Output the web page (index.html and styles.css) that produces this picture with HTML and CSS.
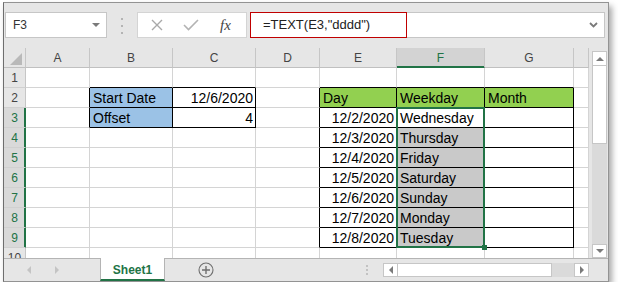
FILE: index.html
```html
<!DOCTYPE html>
<html lang="en">
<head>
    <meta charset="UTF-8">
    <title>TEXT weekday - Sheet1</title>
    <link rel="stylesheet" href="styles.css">
</head>
<body>
    <div class="window">
        <div class="formula-bar">
            <div class="name-box"><span>F3</span><span class="caret"></span></div>
            <div class="grip"><i></i><i></i><i></i></div>
            <div class="fx-buttons">
                <svg class="btn-x" width="12" height="12" viewBox="0 0 12 12"><path d="M1 1 L11 11 M11 1 L1 11" stroke="#a9a9a9" stroke-width="1.4" fill="none"/></svg>
                <svg class="btn-ok" width="16" height="12" viewBox="0 0 16 12"><path d="M1 6 L5.5 10.5 L15 1" stroke="#b3b3b3" stroke-width="1.6" fill="none"/></svg>
                <span class="fx">fx</span>
            </div>
            <div class="formula-input">
                <span class="formula-text">=TEXT(E3,"dddd")</span>
                <svg class="chevron" width="9" height="6" viewBox="0 0 9 6"><path d="M1 1 L4.5 4.5 L8 1" stroke="#7a7a7a" stroke-width="1.8" fill="none"/></svg>
            </div>
        </div>

        <div class="main">
            <div class="sheet">
                <!-- header row -->
                <div class="corner"><span></span></div>
                <div class="ch">A</div><div class="ch">B</div><div class="ch">C</div><div class="ch">D</div>
                <div class="ch">E</div><div class="ch on">F</div><div class="ch">G</div><div class="ch"></div>

                <!-- 1 -->
                <div class="rh">1</div>
                <div class="c"></div><div class="c bb"></div><div class="c bb"></div><div class="c"></div>
                <div class="c bb"></div><div class="c bb"></div><div class="c bb"></div><div class="c"></div>

                <!-- 2 -->
                <div class="rh">2</div>
                <div class="c br"></div>
                <div class="c bk blue">Start Date</div>
                <div class="c bk r">12/6/2020</div>
                <div class="c br"></div>
                <div class="c bk green">Day</div>
                <div class="c bk green">Weekday</div>
                <div class="c bk green">Month</div>
                <div class="c"></div>

                <!-- 3 -->
                <div class="rh on">3</div>
                <div class="c br"></div>
                <div class="c bk blue">Offset</div>
                <div class="c bk r">4</div>
                <div class="c br"></div>
                <div class="c bk r">12/2/2020</div>
                <div class="c bk">Wednesday</div>
                <div class="c bk"></div>
                <div class="c"></div>

                <!-- 4 -->
                <div class="rh on">4</div>
                <div class="c"></div><div class="c"></div><div class="c"></div><div class="c br"></div>
                <div class="c bk r">12/3/2020</div>
                <div class="c bk sel">Thursday</div>
                <div class="c bk"></div>
                <div class="c"></div>

                <!-- 5 -->
                <div class="rh on">5</div>
                <div class="c"></div><div class="c"></div><div class="c"></div><div class="c br"></div>
                <div class="c bk r">12/4/2020</div>
                <div class="c bk sel">Friday</div>
                <div class="c bk"></div>
                <div class="c"></div>

                <!-- 6 -->
                <div class="rh on">6</div>
                <div class="c"></div><div class="c"></div><div class="c"></div><div class="c br"></div>
                <div class="c bk r">12/5/2020</div>
                <div class="c bk sel">Saturday</div>
                <div class="c bk"></div>
                <div class="c"></div>

                <!-- 7 -->
                <div class="rh on">7</div>
                <div class="c"></div><div class="c"></div><div class="c"></div><div class="c br"></div>
                <div class="c bk r">12/6/2020</div>
                <div class="c bk sel">Sunday</div>
                <div class="c bk"></div>
                <div class="c"></div>

                <!-- 8 -->
                <div class="rh on">8</div>
                <div class="c"></div><div class="c"></div><div class="c"></div><div class="c br"></div>
                <div class="c bk r">12/7/2020</div>
                <div class="c bk sel">Monday</div>
                <div class="c bk"></div>
                <div class="c"></div>

                <!-- 9 -->
                <div class="rh on">9</div>
                <div class="c"></div><div class="c"></div><div class="c"></div><div class="c br"></div>
                <div class="c bk r">12/8/2020</div>
                <div class="c bk sel">Tuesday</div>
                <div class="c bk"></div>
                <div class="c"></div>

                <!-- 10 -->
                <div class="rh">10</div>
                <div class="c"></div><div class="c"></div><div class="c"></div><div class="c"></div>
                <div class="c"></div><div class="c"></div><div class="c"></div><div class="c"></div>

                <div class="selection"><span class="handle"></span></div>
            </div>

            <div class="vscroll">
                <div class="sb-btn"><span class="tri-up"></span></div>
                <div class="sb-thumb"></div>
                <div class="sb-track"></div>
                <div class="sb-btn down"><span class="tri-down"></span></div>
            </div>
        </div>

        <div class="tabbar">
            <div class="nav"><span class="tri-left"></span><span class="tri-right"></span></div>
            <div class="tab">Sheet1</div>
            <svg class="add" width="16" height="16" viewBox="0 0 16 16">
                <circle cx="8" cy="8" r="7" stroke="#6f6f6f" stroke-width="1.1" fill="none"/>
                <path d="M8 4 V12 M4 8 H12" stroke="#6f6f6f" stroke-width="1.4"/>
            </svg>
            <div class="grip small"><i></i><i></i><i></i></div>
            <div class="hscroll">
                <div class="sb-btn h"><span class="tri-left dark"></span></div>
                <div class="h-thumb"></div>
                <div class="h-track"></div>
                <div class="sb-btn h"><span class="tri-right dark"></span></div>
            </div>
        </div>
    </div>
</body>
</html>
```

FILE: styles.css
```css
body {
    margin: 0;
    background-color: #fff;
    font-family: "Liberation Sans", Arial, sans-serif;
    color: #000;
}
.window {
    margin: 2px 0 0 3px;
    width: 606px;
    height: 280px;
    box-sizing: border-box;
    border: 1px solid #939393;
    border-left-color: #6e6e6e;
    background-color: #e6e6e6;
    display: flex;
    flex-direction: column;
    box-shadow: 3px 4px 6px rgba(0, 0, 0, 0.35);
}

/* formula bar */
.formula-bar {
    height: 45px;
    flex: none;
    box-sizing: border-box;
    padding: 9px 3px 0 1px;
    display: flex;
    align-items: flex-start;
}
.name-box {
    width: 102px;
    height: 26px;
    box-sizing: border-box;
    border: 1px solid #c6c6c6;
    background-color: #fff;
    display: flex;
    align-items: center;
    justify-content: space-between;
    padding: 0 6px 0 7px;
    font-size: 12px;
    color: #333;
}
.caret {
    width: 0;
    height: 0;
    border-left: 4px solid transparent;
    border-right: 4px solid transparent;
    border-top: 4px solid #7a7a7a;
}
.grip {
    width: 30px;
    display: flex;
    flex-direction: column;
    align-items: center;
    gap: 5px;
    padding-top: 6px;
}
.grip i {
    width: 2px;
    height: 2px;
    background-color: #b4b4b4;
}
.fx-buttons {
    width: 110px;
    height: 26px;
    box-sizing: border-box;
    border: 1px solid #d4d4d4;
    background-color: #fff;
    display: flex;
    align-items: center;
}
.btn-x { margin-left: 13px; }
.btn-ok { margin-left: 20px; }
.fx {
    margin-left: 21px;
    font-family: "Liberation Serif", "Times New Roman", serif;
    font-style: italic;
    font-size: 15px;
    color: #444;
}
.formula-input {
    flex: 1;
    margin-left: 3px;
    height: 26px;
    box-sizing: border-box;
    border: 1px solid #c6c6c6;
    background-color: #fff;
    display: flex;
    align-items: center;
    justify-content: space-between;
}
.formula-text {
    align-self: stretch;
    margin: -1px 0 -1px -1px;
    width: 157px;
    box-sizing: border-box;
    border: 1px solid #c00000;
    padding-left: 12px;
    font-size: 13px;
    line-height: 24px;
    color: #222;
}
.chevron { margin-right: 6px; }

/* grid */
.main {
    height: 210px;
    flex: none;
    display: flex;
}
.sheet {
    position: relative;
    width: 585px;
    height: 210px;
    overflow: hidden;
    background-color: #fff;
    display: grid;
    grid-template-columns: 22px 64px 83px 83px 64px 77px 88px 89px 15px;
    grid-template-rows: repeat(11, 20px);
}
.corner, .ch, .rh {
    background-color: #e6e6e6;
    color: #444;
    font-size: 12px;
    line-height: 20px;
    text-align: center;
    box-sizing: border-box;
    border-right: 1px solid #c6c6c6;
    border-bottom: 1px solid #c0c0c0;
}
.corner {
    position: relative;
}
.corner span {
    position: absolute;
    right: 3px;
    bottom: 2px;
    width: 0;
    height: 0;
    border-left: 12px solid transparent;
    border-bottom: 12px solid #b9b9b9;
}
.ch.on {
    background-color: #d3d3d3;
    color: #217346;
    border-bottom-color: #217346;
    box-shadow: inset 0 -1px 0 #217346;
}
.rh {
    border-bottom-color: #d0d0d0;
}
.rh.on {
    background-color: #d9d9d9;
    color: #217346;
    border-right-color: #217346;
    box-shadow: inset -1px 0 0 #217346;
}
.c {
    box-sizing: border-box;
    border-right: 1px solid #d4d4d4;
    border-bottom: 1px solid #d4d4d4;
    padding: 0 2px 0 3px;
    font-size: 14px;
    line-height: 20px;
    white-space: nowrap;
}
.c.r { text-align: right; }
.c.bk { border-color: #000; }
.c.bb { border-bottom-color: #000; }
.c.br { border-right-color: #000; }
.blue { background-color: #9bc2e6; }
.green { background-color: #92d050; }
.sel { background-color: #c9c9c9; }
.selection {
    position: absolute;
    grid-column: 7 / 8;
    grid-row: 4 / 11;
    top: -1px;
    left: -1px;
    right: 0;
    bottom: 0;
    border: 2px solid #217346;
    pointer-events: none;
}
.handle {
    position: absolute;
    right: -4px;
    bottom: -4px;
    width: 5px;
    height: 5px;
    background-color: #217346;
}

/* scroll bars */
.vscroll {
    flex: 1;
    display: flex;
    flex-direction: column;
    padding: 3px 1px 0 3px;
}
.sb-btn {
    height: 15px;
    box-sizing: border-box;
    border: 1px solid #c6c6c6;
    background-color: #fff;
    display: flex;
    align-items: center;
    justify-content: center;
    flex: none;
}
.sb-btn.down {
    height: 14px;
}
.sb-thumb {
    height: 79px;
    margin-top: -1px;
    box-sizing: border-box;
    border: 1px solid #c6c6c6;
    background-color: #fff;
}
.sb-track {
    flex: 1;
    background-color: #dadada;
}
.tri-up, .tri-down {
    width: 0;
    height: 0;
    border-left: 4px solid transparent;
    border-right: 4px solid transparent;
}
.tri-up { border-bottom: 4px solid #7a7a7a; }
.tri-down { border-top: 4px solid #7a7a7a; }
.tri-left, .tri-right {
    width: 0;
    height: 0;
    border-top: 4px solid transparent;
    border-bottom: 4px solid transparent;
}
.tri-left { border-right: 4px solid #c4c4c4; }
.tri-right { border-left: 4px solid #c4c4c4; }
.tri-left.dark { border-right-color: #7a7a7a; }
.tri-right.dark { border-left-color: #7a7a7a; }

/* sheet tabs */
.tabbar {
    flex: 1;
    box-sizing: border-box;
    border-top: 1px solid #b4b4b4;
    display: flex;
    align-items: center;
}
.nav {
    width: 96px;
    display: flex;
    align-items: center;
    padding-left: 23px;
    box-sizing: border-box;
    gap: 24px;
}
.tab {
    width: 65px;
    align-self: stretch;
    margin-top: -1px;
    box-sizing: border-box;
    border-left: 1px solid #b4b4b4;
    border-right: 1px solid #b4b4b4;
    border-bottom: 2px solid #217346;
    background-color: #fff;
    color: #217346;
    font-weight: bold;
    font-size: 12px;
    display: flex;
    align-items: center;
    justify-content: center;
    padding-top: 2px;
}
.add {
    margin-left: 33px;
}
.grip.small {
    width: 2px;
    margin-left: 152px;
    padding-top: 0;
    gap: 2px;
}
.grip.small i {
    background-color: #c2c2c2;
}
.hscroll {
    width: 206px;
    height: 14px;
    margin-left: 15px;
    display: flex;
}
.sb-btn.h {
    width: 15px;
    height: 14px;
}
.h-thumb {
    width: 155px;
    margin-left: -1px;
    box-sizing: border-box;
    border: 1px solid #c6c6c6;
    background-color: #fff;
}
.h-track {
    flex: 1;
    background-color: #dadada;
}
```
